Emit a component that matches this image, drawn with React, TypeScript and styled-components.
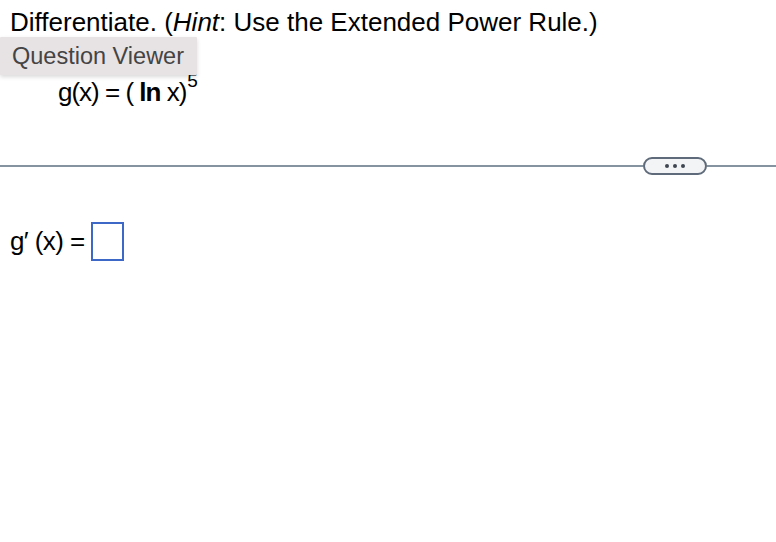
import React from "react";
import styled, { createGlobalStyle } from "styled-components";

const Global = createGlobalStyle`
  html, body { margin: 0; padding: 0; background: #ffffff; }
  body { width: 776px; height: 542px; overflow: hidden; font-family: "Liberation Sans", Arial, sans-serif; color: #000; }
`;

const Page = styled.div`
  position: relative;
  width: 776px;
  height: 542px;
  display: flex;
  flex-direction: column;
`;

const Header = styled.div`
  position: relative;
  padding: 6px 0 0 10px;
  height: 156px;
  box-sizing: border-box;
`;

const Title = styled.div`
  font-size: 26px;
  line-height: 32px;
`;

const Tooltip = styled.div`
  position: absolute;
  left: 0;
  top: 37px;
  width: 197px;
  height: 38px;
  box-sizing: border-box;
  padding-left: 12px;
  background: #e7e2e4;
  color: #444;
  font-family: "Liberation Sans", Arial, sans-serif;
  font-size: 23.5px;
  line-height: 38px;
  box-shadow: 0 2px 4px rgba(0, 0, 0, 0.15);
  border-radius: 1px;
  z-index: 2;
`;

const MathLine = styled.div<{ $indent: number }>`
  padding-left: ${(p) => p.$indent}px;
  margin-top: 39px;
  font-size: 26px;
  letter-spacing: -1px;
  display: flex;
  align-items: center;
  white-space: pre;
`;

const Bold = styled.span`
  font-weight: bold;
`;

const Sup = styled.span`
  font-size: 19px;
  position: relative;
  top: -12px;
  margin-left: 1px;
`;

const Divider = styled.div`
  display: flex;
  align-items: center;
  height: 20px;
`;

const Line = styled.div<{ $w?: number }>`
  height: 2px;
  background: #8592a0;
  ${(p) => (p.$w ? `width: ${p.$w}px;` : "flex: 1;")}
`;

const Pill = styled.div`
  width: 64px;
  height: 18px;
  box-sizing: border-box;
  border: 2px solid #5f6b7a;
  border-radius: 9px;
  background: #f3f4f6;
  display: flex;
  align-items: center;
  justify-content: center;
  gap: 4px;
`;

const Dot = styled.span`
  width: 4px;
  height: 4px;
  border-radius: 50%;
  background: #3f4652;
`;

const Answer = styled.div`
  margin-top: 46px;
  padding-left: 10px;
  display: flex;
  align-items: center;
  font-size: 26px;
  letter-spacing: -0.6px;
  white-space: pre;
`;

const InputBox = styled.div`
  width: 33px;
  height: 39px;
  box-sizing: border-box;
  border: 2px solid #3d68c8;
  margin-left: 7px;
`;

export default function App() {
  return (
    <>
      <Global />
      <Page>
        <Header>
          <Title>
            Differentiate. (<i>Hint</i>: Use the Extended Power Rule.)
          </Title>
          <Tooltip>Question Viewer</Tooltip>
          <MathLine $indent={48}>
            g(x) = ( <Bold>ln</Bold> x)<Sup>5</Sup>
          </MathLine>
        </Header>
        <Divider>
          <Line $w={643} />
          <Pill>
            <Dot />
            <Dot />
            <Dot />
          </Pill>
          <Line />
        </Divider>
        <Answer>
          g′ (x) =<InputBox />
        </Answer>
      </Page>
    </>
  );
}
